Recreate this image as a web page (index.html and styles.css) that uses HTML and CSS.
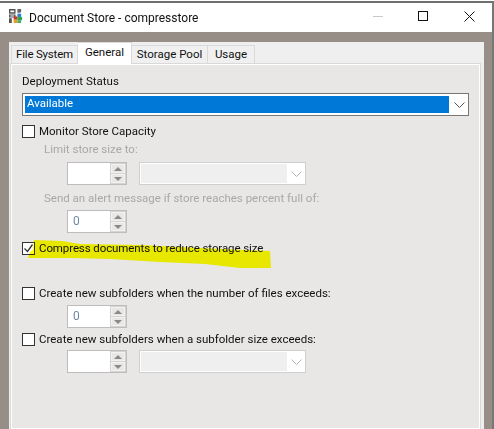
FILE: index.html
```html
<!DOCTYPE html>
<html lang="en">
<head>
<meta charset="utf-8">
<title>Document Store - compresstore</title>
<link rel="stylesheet" href="styles.css">
</head>
<body>
<div class="window">
  <header class="titlebar">
    <svg class="app-icon" width="14" height="14" viewBox="0 0 15 15">
      <path d="M0 0h7v5H0zM0 6h7v3H0zM0 10h3v5H0z" fill="#555"/>
      <path d="M1.500 1.500h4v2h-4zM1.500 7h4v1h-4z" fill="#fff"/>
      <path d="M9 0l4 0v3l-1 1H9z" fill="#666"/>
      <path d="M5 8h4v3.500H5z" fill="#c8342c"/>
      <path d="M9 5h4v3.500H9z" fill="#2a7fd0"/>
      <path d="M9 8.500h5v3.500H9z" fill="#2aa84a"/>
      <path d="M5 11.500h4V15H5z" fill="#e8a020"/>
      <path d="M9 12h4v3H9z" fill="#4aa870"/>
    </svg>
    <span class="title">Document Store - compresstore</span>
    <div class="controls">
      <span class="min"></span>
      <span class="max"></span>
      <svg class="close" width="11" height="11" viewBox="0 0 11 11"><path d="M.5.500l10 10M10.500.500l-10 10" stroke="#111" stroke-width="1" fill="none"/></svg>
    </div>
  </header>
  <div class="body">
    <div class="tabctl">
      <nav class="tabs">
        <span class="tab">File System</span>
        <span class="tab active">General</span>
        <span class="tab">Storage Pool</span>
        <span class="tab">Usage</span>
      </nav>
      <main class="panel">
        <div class="heading">Deployment Status</div>
        <div class="status">
          <div class="status-value">Available</div>
          <svg class="status-arrow" width="11" height="6" viewBox="0 0 11 6"><path d="M.5.500l5 5 5-5" stroke="#555" fill="none"/></svg>
        </div>

        <label class="check check-monitor"><span class="box"></span>Monitor Store Capacity</label>
        <div class="sub muted sub-limit">Limit store size to:</div>
        <div class="controls-row row-limit">
          <div class="spin"><span class="spin-value"></span><span class="spin-btns"><span class="btn"><i class="up"></i></span><span class="btn"><i class="down"></i></span></span></div>
          <div class="combo"><span class="combo-fill"></span><svg width="11" height="6" viewBox="0 0 11 6"><path d="M.5.500l5 5 5-5" stroke="#b4b4b4" fill="none"/></svg></div>
        </div>
        <div class="sub muted sub-alert">Send an alert message if store reaches percent full of:</div>
        <div class="controls-row row-alert">
          <div class="spin"><span class="spin-value">0</span><span class="spin-btns"><span class="btn"><i class="up"></i></span><span class="btn"><i class="down"></i></span></span></div>
        </div>

        <label class="check check-compress"><span class="box"><svg width="11" height="11" viewBox="0 0 11 11"><path d="M1.500 5.500l3 3 5-7" stroke="#333" stroke-width="1.300" fill="none"/></svg></span>Compress documents to reduce storage size</label>

        <label class="check check-files"><span class="box"></span>Create new subfolders when the number of files exceeds:</label>
        <div class="controls-row row-files">
          <div class="spin"><span class="spin-value">0</span><span class="spin-btns"><span class="btn"><i class="up"></i></span><span class="btn"><i class="down"></i></span></span></div>
        </div>
        <label class="check check-size"><span class="box"></span>Create new subfolders when a subfolder size exceeds:</label>
        <div class="controls-row row-size">
          <div class="spin"><span class="spin-value"></span><span class="spin-btns"><span class="btn"><i class="up"></i></span><span class="btn"><i class="down"></i></span></span></div>
          <div class="combo"><span class="combo-fill"></span><svg width="11" height="6" viewBox="0 0 11 6"><path d="M.5.500l5 5 5-5" stroke="#b4b4b4" fill="none"/></svg></div>
        </div>
      </main>
    </div>
  </div>
  <svg class="marker" width="494" height="429" viewBox="0 0 494 429" aria-hidden="true">
    <path d="M34 240L62 241L80 244L140 245L200 248L270 251L271 268L240 268L205 264L160 262L110 259L70 258L28 258L30 252L33 250z" fill="#ffff00"/>
  </svg>
</div>
</body>
</html>
```
FILE: styles.css
```css
* { box-sizing: border-box; }
html, body { margin: 0; height: 100%; overflow: hidden; }
body {
  background: #fff;
  font-family: Roboto, "Noto Sans", sans-serif;
  font-size: 11.5px;
  color: #111;
}
.window {
  position: relative;
  width: 494px;
  height: 428px;
  display: flex;
  flex-direction: column;
  border-top: 2px solid #6f6f6f;
  border-right: 2px solid #777;
  margin-top: 1px;
}
.titlebar {
  flex: 0 0 29px;
  background: #fff;
  display: flex;
  align-items: center;
  padding-left: 9px;
}
.app-icon { flex: none; margin-right: 6px; margin-bottom: 3px; }
.title { font-size: 12px; color: #111; }
.controls { margin-left: auto; display: flex; align-items: center; height: 100%; padding-bottom: 3px; }
.min { width: 10px; height: 1px; background: #c8c8c8; margin-right: 35px; }
.max { width: 10px; height: 10px; border: 1px solid #111; margin-right: 36px; }
.close { margin-right: 17px; }
.body {
  flex: 1;
  background: #968e87;
  padding: 10px 8px 0 9px;
  min-height: 0;
  display: flex;
}
.tabctl {
  flex: 1;
  background: #efefef;
  display: flex;
  flex-direction: column;
}
.tabs { display: flex; align-items: flex-end; height: 21px; padding-left: 2px; flex: none; position: relative; z-index: 1; }
.tab {
  height: 18px;
  padding: 0 5px 1px;
  background: #f0f0f0;
  border: 1px solid #d9d9d9;
  border-left: 0;
  border-bottom: 0;
  display: flex;
  align-items: center;
  justify-content: center;
  white-space: nowrap;
}
.tab:nth-child(1) { width: 67px; border-left: 1px solid #d9d9d9; letter-spacing: -0.2px; }
.tab:nth-child(2) { width: 54px; }
.tab:nth-child(3) { width: 76px; }
.tab:nth-child(4) { width: 47px; }
.tab.active { height: 22px; margin-bottom: -1px; background: #fff; border-left: 0; padding-bottom: 3px; }
.panel {
  flex: 1;
  margin: 0 3px 0 1px;
  background: #e8e7e5;
  border: 1px solid #d9d9d9;
  box-shadow: inset 0 0 0 1px #fff;
  border-bottom: 0;
  padding: 0 0 0 11px;
  display: flex;
  flex-direction: column;
  align-items: flex-start;
}
.heading { margin-top: 9px; height: 16px; line-height: 16px; }
.status {
  margin-top: 4px;
  width: 447px;
  height: 23px;
  border: 1px solid #777;
  background: #fff;
  padding: 2px;
  display: flex;
  align-items: center;
}
.status-value {
  width: 424px;
  height: 17px;
  line-height: 14px;
  background: #0078d7;
  color: #fff;
  padding-left: 2px;
}
.status-arrow { margin-left: 5px; }
.check { display: flex; align-items: center; height: 15px; padding-bottom: 2px; white-space: nowrap; }
.box {
  flex: none;
  width: 13px;
  height: 13px;
  margin-top: 2px;
  border: 1px solid #333;
  background: #fff;
  margin-right: 4px;
  display: flex;
  align-items: center;
  justify-content: center;
}
.check-monitor { margin-top: 8px; }
.sub { height: 16px; line-height: 16px; margin-left: 22px; white-space: nowrap; }
.muted { color: #a8a8a8; }
.sub-limit { margin-top: 2px; }
.controls-row { display: flex; gap: 12px; margin-left: 45px; }
.row-limit { margin-top: 5px; }
.sub-alert { margin-top: 5px; }
.row-alert { margin-top: 4px; }
.check-compress { margin-top: 8px; letter-spacing: -0.1px; }
.check-files { margin-top: 30px; }
.row-files { margin-top: 4px; }
.check-size { margin-top: 4px; }
.row-size { margin-top: 3px; }
.spin {
  width: 60px;
  height: 23px;
  display: flex;
  background: #fff;
  border: 1px solid #bdbdbd;
}
.spin-value { flex: 1; padding-left: 5px; line-height: 20px; color: #6f8aa0; font-size: 12px; }
.spin-btns {
  width: 16px;
  flex: none;
  background: #d4d3d1;
  display: flex;
  flex-direction: column;
  gap: 1px;
  padding: 1px;
}
.btn { flex: 1; background: #e8e7e5; border: 1px solid #f2f2f2; display: flex; align-items: center; justify-content: center; }
.up, .down { width: 0; height: 0; border-left: 4px solid transparent; border-right: 4px solid transparent; }
.up { border-bottom: 4px solid #8a8a8a; }
.down { border-top: 4px solid #8a8a8a; }
.combo {
  width: 167px;
  height: 23px;
  background: #fff;
  border: 1px solid #cfcfcf;
  padding: 1px;
  display: flex;
  align-items: center;
}
.combo-fill { width: 146px; height: 100%; background: #efefef; }
.combo svg { margin-left: 4px; }
.marker { position: absolute; left: 0; top: -3px; mix-blend-mode: multiply; pointer-events: none; }
```
